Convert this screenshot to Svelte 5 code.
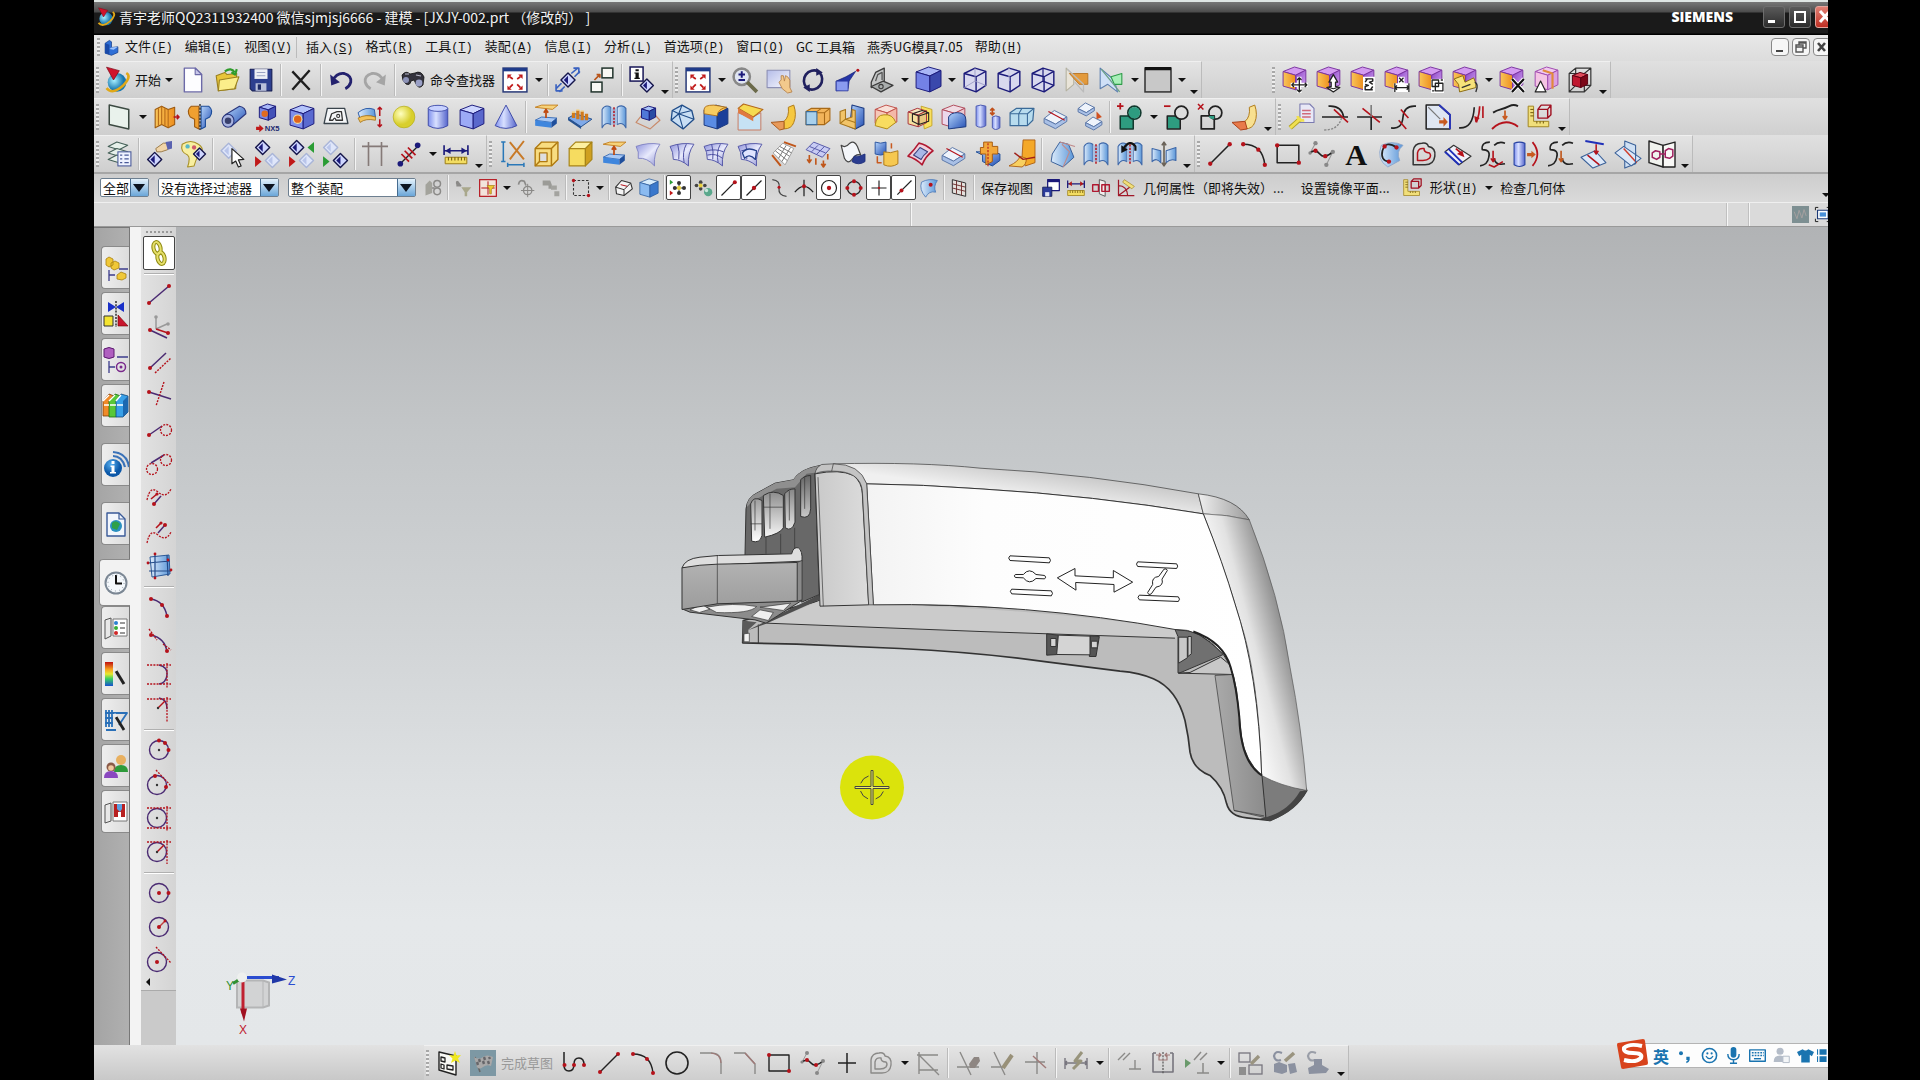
<!-- App.svelte (Svelte 5 Runes): NX modeling window -->
<script lang="ts">
  type Menu = { label: string; key?: string; split?: boolean };

  const RED = "#b5121b";
  const NAVY = "#1b1a7a";
  const GRAY = "#8b8a88";

  // --- svg helpers, all on a 24x24 grid ---
  const p = (d: string, stroke = "#222", w = 1.4, fill = "none", extra = "") =>
    `<path d="${d}" stroke="${stroke}" stroke-width="${w}" fill="${fill}" stroke-linejoin="round" ${extra}/>`;
  const f = (d: string, fill: string, stroke = "none", w = 1) => p(d, stroke, w, fill);
  const dot = (x: number, y: number, r = 2, fill = RED) => `<circle cx="${x}" cy="${y}" r="${r}" fill="${fill}"/>`;
  const ring = (x: number, y: number, r: number, stroke = "#222", w = 1.4, extra = "") =>
    `<circle cx="${x}" cy="${y}" r="${r}" fill="none" stroke="${stroke}" stroke-width="${w}" ${extra}/>`;
  const dash = 'stroke-dasharray="2 1.2"';

  function cube(x: number, y: number, s: number, top: string, left: string, right: string, line = NAVY) {
    const q = (a: number, b: number) => `${(x + a * s).toFixed(1)} ${(y + b * s).toFixed(1)}`;
    return (
      f(`M${q(0, 0.2)}L${q(0.5, 0)}L${q(1, 0.14)}L${q(0.55, 0.36)}Z`, top, line, 0.9) +
      f(`M${q(0, 0.2)}L${q(0.55, 0.36)}L${q(0.55, 1)}L${q(0, 0.84)}Z`, left, line, 0.9) +
      f(`M${q(0.55, 0.36)}L${q(1, 0.14)}L${q(1, 0.78)}L${q(0.55, 1)}Z`, right, line, 0.9)
    );
  }

  const dia = (x: number, y: number, r: number, on = true) =>
    f(`M${x} ${y - r}L${x + r} ${y}L${x} ${y + r}L${x - r} ${y}Z`, on ? "#cfd6ff" : "#dfe6fa", on ? "#15154a" : "#a9b5d8", 1.3) +
    f(`M${x} ${y - r * 0.6}V${y + r * 0.6}L${x - r * 0.6} ${y}Z`, on ? "#1b1a7a" : "#b9c5ea");

  const gold = (extra: string) => cube(1, 0, 21, "#d49cf0", "url(#gGold)", "url(#gPurple)", "#7a34a0") + extra;
  const sheetBlock = (x: number, y: number, s: number) =>
    f(`M${x} ${y + s * 0.35}L${x + s * 0.45} ${y}L${x + s} ${y + s * 0.28}L${x + s * 0.5} ${y + s * 0.6}Z`, "#eef3fb", "#5b77a8", 0.9) +
    f(`M${x} ${y + s * 0.35}V${y + s * 0.55}L${x + s * 0.5} ${y + s * 0.8}L${x + s} ${y + s * 0.48}V${y + s * 0.28}L${x + s * 0.5} ${y + s * 0.6}Z`, "#a9c0e6", "#5b77a8", 0.9);
  const ribs =
    f("M1 5Q4 0 9 3V19Q4 16 1 22Z", "url(#gSky)", "#3d67a8", 1) +
    f("M15 3Q20 0 23 4V22Q20 16 15 19Z", "url(#gSky)", "#3d67a8", 1) +
    f("M9 4H15V19H9Z", "#a7bfe0") + p("M12 3V21", RED, 1.4, "none", dash);
  const emboss =
    f("M2 15L8 12L22 13L17 17Z", "#a8c8f5", "#2c62b0", 0.8) + f("M2 15L17 17V22L2 20Z", "#3f86dd") + f("M17 17L22 13V18L17 22Z", "#1f4f9c") +
    f("M2 3L8 1H23L18 5Z", "#f6d27a", "#c07a18", 0.8) + p("M12 13V6M10 8L12 5L14 8", "#c04a10", 1.6);
  const surf = (lines: string) => f("M1 5Q12 1 23 3Q17 11 18 23Q11 17 4 17Q4 10 1 5Z", "url(#gLav)", "#5558a8", 0.9) + p(lines, "#4a4da0", 0.9);
  const ruler = f("M2 15H22V21H2Z", "#f3dd62", "#9a7b10", 0.9) + p("M5 15V18M8 15V18M11 15V18M14 15V18M17 15V18M20 15V18", "#6a5208", 0.9);
  const caliper = f("M2 2H7V16H21V21H2Z", "#f1df7a", "#a08420", 0.9) + p("M4 5H7M4 8H7M4 11H7M10 18V16M13 18V16M16 18V16", "#6a5208", 0.9);
  const wire = (hidden: string) =>
    f("M2 6L12 1L22 4V17L13 23L2 19Z", "#d8d8ee", NAVY, 1.3) + p("M2 6L13 9L22 4M13 9V23", NAVY, 1.3) + hidden;
  const curveArrow = (a: string, b: string) => p(a, "#222", 1.5) + p(b, RED, 1.5);
  const bigCircle = (x: number, y: number, extra: string) => ring(x, y, 9.5, "#4a2a72", 1.4) + extra;
  const shapeOffset = (c: string, d: string) =>
    p("M2 22V9Q3 2 10 2Q15 1 16 5Q23 6 22 14Q21 22 13 22Z", c, 1.4) + p("M6 18V11Q7 6 12 7Q12 11 17 11Q19 13 17 16Q15 18 11 18Z", d, 1.4);

  const icons: Record<string, string> = {
    logo: dot(12, 14, 8, "url(#gGlobe)") + p("M3 19Q8 25 17 17Q25 9 20 6", "#e0a818", 2.2) + f("M3 1L14 4L9 12Z", "#d0142c", "#7c0818", 0.6),
    part: f("M3 6L9 2L12 4V12L21 11V19L12 23L3 20Z", "#2f6fd6", "#123a86", 1) + f("M3 6L9 8V22L3 20Z", "#1a4aa8") + f("M12 12L21 11L15 15L9 14Z", "#9cc4ff"),
    new: f("M4 1H14L20 7V23H4Z", "#fdfdff", "#6c6aa8", 1.3) + f("M14 1V7H20Z", "#c9c8ea", "#6c6aa8", 1),
    open: f("M2 8L10 5L12 7L21 6L20 20L4 22Z", "#e8c53a", "#9a8020", 1) + f("M5 12L23 9L19 20L4 22Z", "#fbee8a", "#9a8020", 1) + p("M10 4Q16 0 19 5M16 5L19.500 7L21 2", "#2f9c2c", 2),
    save: f("M2 2H22V22H4L2 20Z", "#2d3f8f", "#141d55", 1) + f("M6 2H18V11H6Z", "#eef0f6") + p("M8 5H16M8 8H16", "#9ba3c4", 1) + f("M7 15H17V22H7Z", "#b9c0da") + f("M9 16H12V21H9Z", "#1d2a66"),
    del: p("M4 4L20 21M20 3L4 21", "#1f1f1f", 2.2),
    undo: p("M4 13Q8 5 15 6Q22 8 21 14Q20 18 16 20", "#23216e", 2.6) + f("M2 7L3 17L11 14Z", "#23216e"),
    redo: p("M20 13Q16 5 9 6Q2 8 3 14Q4 18 8 20", "#a5a5a5", 2.6) + f("M22 7L21 17L13 14Z", "#a5a5a5"),
    find: f("M1 7Q5 2 9 6L14 5Q20 2 23 9L22 17Q18 22 15 16L13 12L10 13Q9 18 5 16Q1 13 1 7Z", "#33323c", "#111", 0.8) + dot(5, 12, 3, "#8d93b8") + dot(18, 15, 3.4, "#9aa0c6") + p("M4 6H8M15 7L20 8", "#b9b9c9", 1.2),
    fit: `<rect x="1" y="1" width="22" height="22" fill="#fff" stroke="#2a3b78" stroke-width="1.4"/>` + f("M1 1H23V4H1Z", "#1e3b8a") + p("M7 9L10 11M17 9L14 11M7 19L10 16M17 19L14 16", "#c01818", 1.6) + f("M5 7H9L5 11ZM19 7H15L19 11ZM5 21H9L5 17ZM19 21H15L19 17Z", "#c01818"),
    orient: dia(12, 12, 6.5) + p("M15 6L21 1M18 9L23 4M1 20L6 15M4 23L9 18", "#3a62c0", 1.5) + p("M17 1H22V6M1 16V22H7", "#3a62c0", 1.5),
    boxes: `<rect x="12" y="1" width="10" height="9" fill="#f8f8f4" stroke="#23352e" stroke-width="1.4"/><rect x="2" y="14" width="10" height="9" fill="#f8f8f4" stroke="#23352e" stroke-width="1.4"/>` + p("M5 12L10 7M7 7H10V10", "#b8541a", 1.6),
    info: `<rect x="1" y="0" width="12" height="13" fill="#fff" stroke="#1b1a5a" stroke-width="1.4"/>` + f("M6 2H9V4H6ZM5 5H9V10H10V11H5V10H6V6H5Z", "#111") + dia(16.5, 17, 6),
    zoom: ring(9, 9, 7.5, "#888", 2.4) + dot(9, 9, 6.3, "#dfe5f2") + p("M14 14L23 23", "#6b6a4a", 3.4) + p("M9 4V10M6 7H12M6 12H12", NAVY, 1.8),
    pan: f("M1 3H22V19H1Z", "url(#gPanel)", "#8d90b5", 1) + f("M12 14L14 12V8L16 8L17 13L18 8L20 9L22 12V19L24 23L20 24L15 20Z", "#f2c98c", "#b5814a", 0.8),
    rotate: p("M6 19A9.500 9.500 0 0 1 17 4M18 5A9.500 9.500 0 0 1 7 20", "#20205e", 2.4) + f("M15 1L21 5L15 8ZM9 23L3 19L9 16Z", "#20205e"),
    persp: f("M2 13L11 9L20 4L14 13L13 20L2 22Z", "#2536a8", "#131c6c", 0.6) + f("M2 13H13V22H2Z", "#8a9bf0", "#2b38a0", 0.8) + dot(22, 3, 1.4),
    section: f("M3 14L7 5L15 1V15L3 19Z", "#c4c6c6", "#3c3c3c", 1.2) + f("M3 18L14 13L23 17L12 23Z", "#a9adad", "#3c3c3c", 1.2) + p("M7 13L9 7L13 5V12", "#555", 1.2) + ring(12, 18, 2, "#3c3c3c", 1),
    shaded: cube(1, 0, 23, "#a9b6f6", "#7482e6", "#3a48ac"),
    wireA: wire(p("M12 1V13L2 19M12 13L22 17", "#9a9ac4", 0.8)),
    wireB: wire(p("M12 1V13", "#c5c5dc", 0.8)),
    wireC: wire(p("M12 1V13L2 19M12 13L22 17", NAVY, 1.1)),
    clipA: f("M2 1L9 8V16L2 22Z", "#e9e4d8", "#b5b2a0", 1) + f("M5 6H22V16H14Z", "#e39a3c", "#b57020", 0.8) + p("M3 2L18 16V23L10 14", "#bbb", 1.2),
    clipB: f("M2 1L15 12L18 23L9 16L2 20Z", "#cfe0f8", "#5d7fb0", 1) + f("M12 9L22 6V16H15Z", "#a8efb8", "#2d9c48", 1) + p("M3 2L20 23", "#6aa088", 1.2),
    bg: `<rect x="0" y="1" width="24" height="22" fill="#c8c8c8" stroke="#333" stroke-width="1.4"/>` + f("M0 0H24V3H0Z", "#111"),
    moveFace: gold(p("M16 9V24M8 16.500H24", "#fff", 4) + p("M16 10V23M9 16.500H23M14 12L16 10L18 12M14 21L16 23L18 21M11 14.500L9 16.500L11 18.500M21 14.500L23 16.500L21 18.500", "#222", 1.2)),
    pullFace: gold(f("M16 7L20 14H18V18L22 19L16 23L10 19L14 18V14H12Z", "#fff", "#222", 1.2) + p("M12 19L16 20L20 19", "#222", 1)),
    replaceFace: gold(f("M12 9H23V23H12Z", "#fff") + p("M14 11H21V13L18 14L21 16M21 21H14V18L17 17L14 16M16 11L14 14M19 21L21 18", "#222", 1.3)),
    dimFace: gold(f("M9 15H24V23H9ZM13 9H19V15H13Z", "#fff") + p("M10 15V23M23 15V23M10 19H23M12 17L10 19L12 21M21 17L23 19L21 21M14 10L18 14M18 10L14 14", "#222", 1.2)),
    groupFace: gold(f("M12 11H24V24H12Z", "#fff") + p("M13 12H19V18H13ZM16 15H23V22H16ZM13 22H15M21 12H23", "#222", 1.2)),
    labelFace: gold(f("M2 11L10 8L12 14L20 10L22 15L22 19L7 23L6 16Z", "#f7e27a", "#8a6a10", 0.9) + p("M9 19L17 16M21 14Q25 16 22 23", "#333", 1.3)),
    deleteFace: gold(p("M12 11L23 23M23 11L12 23", "#fff", 3.8) + p("M12 11L23 23M23 11L12 23", "#111", 2)),
    mirrorFace: cube(2, 0, 21, "#efc8f0", "#f4c4e4", "#dca0e0", "#a04ab0") + p("M9 3L18 6V20", "#e08a3a", 2) + f("M7 13L12 23H2Z", "#fff", "#222", 1.1),
    redCube: p("M2 6L8 1H22V17L16 23H2ZM2 6H16V23M16 6L22 1M8 1V17L2 23M8 17H22", "#333", 1.1) + cube(5, 5, 14, "#e04a5a", "#c01830", "#7c0818", "#5c0010"),

    sheet: f("M3 1L21 5V23L3 19Z", "#e9f2ec", "#3c4a42", 1.4),
    extrude: f("M2 5L8 2L14 5L20 3V19L14 22L8 19L2 22Z", "url(#gGold)", "#9c5a10", 1) + p("M8 2V19M14 5V22M5 4V20M11 4V20", "#b56a18", 1) + p("M19 12H24M22 10L24 12L22 14", RED, 1.5),
    revolve: f("M11 2L4 2Q-1 6 3 12L7 14V21L11 23Z", "#f0a030", "#9c5a10", 1) + f("M13 2L20 2Q25 6 21 12L17 14V21L13 23Z", "url(#gBlue)", "#1c4c98", 1) + p("M12 0V24", "#222", 1.2, "none", dash),
    tube: f("M4 10L17 2Q23 3 23 9L9 21Z", "url(#gBlue)", "#2a367c", 1) + `<ellipse cx="6.500" cy="15.500" rx="5.500" ry="6" fill="#a9b4e0" stroke="#2a367c"/>` + dot(6.5, 15.5, 3, "#39406c"),
    nx5: cube(4, 0, 15, "#a8b8f8", "#7a88e4", "#4452b8") + dot(9, 9, 3, "#e06a20") + `<text x="9" y="25" font-family="Liberation Sans, sans-serif" font-size="7" font-weight="700" fill="#222a70">NX5</text>` + f("M1 21H4V19L8 22.500L4 26V24H1Z", "#c01818"),
    hole: cube(1, 1, 22, "#b4c4fb", "#7f90ec", "#5a6ad0") + dot(8, 14, 4.4, "#f4e0a0") + dot(8, 14, 3.4, "#e0641c"),
    plan: f("M4 4H20L23 18H1Z", "#f4f6f8", "#3a444c", 1.2) + p("M6 15L8 9L13 7H17L18 15H12Q11 11 9 15Z", "#333", 1.2) + ring(14, 11, 1.4, "#333", 1),
    offsetFace: f("M1 8Q8 2 16 5L17 12Q8 9 3 14Z", "url(#gSky)", "#2d5ca8", 0.9) + f("M1 13Q8 9 17 12V15Q8 13 3 17Z", "#f3c35a", "#a8761c", 0.8) + p("M21 3V11M21 14V21M19 5L21 3L23 5M19 19L21 21L23 19", RED, 1.4),
    sphere: dot(12, 12, 10, "url(#gYel)") + ring(12, 12, 10, "#b8b020", 0.7),
    cyl: f("M3 4Q12 -1 21 4V20Q12 25 3 20Z", "url(#gBlueH)", "#3e4aa8", 0.9) + `<ellipse cx="12" cy="4" rx="9" ry="2.800" fill="#c8d2ff" stroke="#3e4aa8" stroke-width=".8"/>`,
    block: cube(1, 1, 22, "#cdd6ff", "#9caaf6", "#5a68cc"),
    cone: f("M12 1L22 20Q12 25 2 20Z", "url(#gBlueH)", "#3e4aa8", 0.9),
    emboss,
    pads: f("M1 13L8 9L23 14L13 21Z", "#7fa9e8", "#24508f", 0.9) + f("M1 13L13 21V23L1 15Z", "#24508f") + p("M6 13V8M10 14V6M14 15V7M18 15V9", "#d07a1c", 3) + p("M6 8V7M10 6V5M14 7V6", "#f8cf70", 3),
    ribs,
    patternFace: p("M12 3L23 15L14 23L1 17Z", "#c88a6a", 1.1) + cube(6, 2, 13, "#a8c4f8", "#5078d8", "#2a4ca4"),
    poly: f("M12 1L21 6L23 14L13 23L2 15L3 6Z", "#c8def4", "#1f4c88", 1.2) + p("M12 1L9 9L3 6M9 9L13 23M9 9L21 6M9 9L2 15M9 9L23 14", "#1f4c88", 1),
    blend: cube(1, 1, 22, "#f6bd50", "#5a8ce4", "#1a3f9a", "#1c3a80") + f("M1 5Q1 1 10 1L22 3Q14 4 13 11L1 9Z", "#f7cc60", "#a86a18", 0.8),
    chamfer: f("M1 8L13 13L22 8V24H1Z", "#c6e2f4", "#c87a60", 0.9) + f("M1 4L6 0L24 5L15 12Z", "#f6da50", "#b5681a", 1) + f("M1 4L15 12V16L1 8Z", "#e07a40"),
    sweep: f("M12 16Q17 12 16 3L21 1Q24 10 21 17Q19 23 12 23Z", "#f6c840", "#b07a18", 0.9) + f("M0 17L12 16L12 23L8 24Z", "#e89a5a", "#a85a20", 0.9),
    thicken: f("M1 7L6 4H23L23 15L18 19H1Z", "#f2b45a", "#a86a18", 1) + f("M1 7H11V19H1Z", "#a8d0ec", "#3a6a98", 1) + p("M11 7L15 4M18 8V19M11 8H18L23 4", "#a86a18", 1),
    shell: f("M12 1L23 4V19L15 23L10 21Z", "url(#gBlue)", "#1c3a80", 1) + f("M1 7L6 5V14L12 12V5L15 6V23L1 18Z", "#f2c468", "#a8761c", 1) + p("M1 18L6 14L15 17", "#a8761c", 1),
    domeRed: cube(2, 1, 20, "#f8e0d8", "#f6c8b8", "#f4b8a8", "#c0504a") + f("M2 20Q3 10 10 10Q18 9 21 17L13 23Z", "#f8dc60", "#b08a18", 0.9),
    domeGrid: f("M13 2L23 5V20L16 23Z", "#f8e060", "#c0a020", 0.8) + cube(1, 4, 17, "#f8e8c0", "#f4e0a0", "#e8c880", "#a8303a") + p("M5 9L14 6L20 8V16L11 19L5 16ZM5 9L11 11L20 8M11 11V19", "#222", 1),
    domeBlue: cube(1, 1, 21, "#f0dce4", "#ecd8ec", "#ecc8d0", "#b04a5a") + f("M7 23V12Q9 8 15 8Q23 8 23 15V21Z", "url(#gBlue)", "#1c3a80", 0.9),
    cylPair: f("M1 2Q5 0 10 2V20Q5 23 1 20Z", "url(#gBlueH)", "#4c5ab0", 0.9) + f("M16 12Q19 10 23 12V22Q19 25 16 22Z", "url(#gBlueH)", "#4c5ab0", 0.9) + p("M16 4V10M14 6L16 4L18 6M14 8L16 10L18 8", "#c0501a", 1.5),
    boxSplit: f("M1 8L7 4H23L22 15L17 20H1Z", "#b8dcee", "#3a6a98", 1.1) + p("M1 9H17L23 4M17 9V20M12 4L9 9V20", "#3a6a98", 1),
    trimSheet: sheetBlock(1, 6, 21) + p("M5 7L20 15", RED, 1.1),
    sheets: sheetBlock(1, -1, 15) + sheetBlock(8, 12, 15) + f("M18 7L23 12L18 14Z", "#d05020"),
    unite: f("M3 11H15V23H3Z", "#2e9c80", "#12392e", 1.4) + ring(16, 8, 6, "#12392e", 1.6) + dot(16, 8, 5.3, "#2e9c80") + p("M3 -1V5M0 2H6", RED, 1.6),
    subtract: f("M3 11H15V23H3Z", "#2e9c80", "#222", 1.4) + dot(16, 8, 6, "#dedede") + ring(16, 8, 6, "#222", 1.6) + p("M0 2H6", RED, 1.6),
    intersect: p("M3 11H15V23H3Z", "#222", 1.6) + ring(16, 8, 6, "#222", 1.6) + f("M10 11H15V14Q11 14 10 11Z", "#2e9c80") + p("M0 0L5 5M5 0L0 5", RED, 1.4),
    sweepRed: f("M12 16Q17 12 16 3L21 1Q24 10 21 17Q19 23 12 23Z", "#f8e090", "#b07a18", 0.9) + f("M0 17L12 16L14 23L8 24Z", "#e87a4a", "#a8401a", 0.9),
    editFeature: f("M11 0H20L24 4V17H11Z", "#e8e8f6", "#7a7ab0", 1) + p("M13 6H21M13 9H21M13 12H21", "#d06a7a", 1.2) + p("M2 22L11 14", "#b0a020", 4.4) + p("M2 22L12 13M9 11Q9 16 15 15", "#f0e050", 2.6),
    curveEdit: curveArrow("M0 12H24M6 2Q18 1 20 12", "M11 5L24 17") + p("M2 24Q15 24 18 13", "#888", 1.3, "none", dash),
    cross: curveArrow("M1 12H24M14 12V24", "M6 4L22 17") + p("M14 1V12", "#777", 1.4),
    sCurve: curveArrow("M1 22Q11 24 12 12Q13 1 24 2", "M8 15L15 23M10 5L17 13"),
    planeBox: f("M2 1H14L24 10V23H2Z", "#dfe6f2", "#222", 1.4) + p("M14 1L24 10V23", "#2a36b8", 1.8) + p("M4 3L15 14", "#777", 1) + f("M14 15H18V12L22 16.500L18 21V18H14Z", "#c85a20"),
    curveOffset: curveArrow("M1 22Q14 23 15 3", "M17 17Q20 9 20 2M23 13V2") + f("M15 11L20 13L16 17Z", RED),
    wave: p("M1 8Q4 6 8 5T16 2T24 2", "#222", 1.8) + p("M0 23Q12 12 24 21", RED, 1.8) + p("M12 6V13M10 11L12 14L14 11", "#c85a20", 1.6),
    caliperBox: caliper + p("M11 5L14 1H23V10L20 13H11ZM11 5H20V13M20 5L23 1", "#a01020", 1.3),

    list: f("M2 5L10 1L20 4L12 8Z", "#e6f0ea", "#446058", 1) + f("M2 11L10 7L20 10L12 14Z", "#e6f0ea", "#446058", 1) + f("M2 17L10 13L16 15L12 20Z", "#e6f0ea", "#446058", 1) + `<rect x="11" y="10" width="12" height="13" fill="#eef2ff" stroke="#4a5a98"/>` + p("M13 13H15M17 13H21M13 16.500H15M17 16.500H21M13 20H15M17 20H21", "#4a5a98", 1.3),
    hand: dia(8, 17, 6.5) + f("M9 7L16 2L22 2L20 8L14 10L10 10Z", "#f0d4a8", "#9a7a48", 0.9) + f("M18 1L24 0V7L20 8Z", "#5a62b0"),
    palette: f("M2 3Q10 -2 17 3Q22 6 20 11Q16 12 13 23L7 24Q10 15 7 13Q0 10 2 3Z", "#f8efa0", "#a89028", 1) + dot(7, 5, 2, "#58b8c8") + dot(13, 6, 2, "#d05a6a") + dia(18, 12, 5.5),
    select: dia(8, 9, 7, false) + f("M11 7L22 17L17 17.500L19.500 23L17 24L14.500 18.500L11 21Z", "#fff", "#222", 1.1),
    diaA: dia(8, 6, 6.5) + dia(17, 18, 6.5, false) + f("M1 14L7 19L1 24Z", "#c01818"),
    diaB: dia(8, 6, 6.5) + dia(17, 18, 6.5, false) + f("M24 1L18 6L24 11Z", "#2a9c34") + f("M1 14L7 19L1 24Z", "#c01818"),
    diaC: dia(8, 6, 6.5, false) + dia(17, 18, 6.5) + f("M1 14L7 19L1 24Z", "#2a9c34"),
    hash: p("M6 1V23M18 1V23M0 5H24", "#857a78", 1.5),
    dims: p("M3 22L22 3", "#222", 1.2) + p("M5 12L12 19M8 9L15 16M11 6L18 13", RED, 1.6) + dot(4, 21, 2.6, NAVY) + dot(20, 4, 2.6, NAVY),
    rulerDim: ruler + p("M1 4V13M23 4V13M1 9H23", NAVY, 1.5) + f("M2 9L7 6V12ZM22 9L17 6V12Z", NAVY),

    sketchX: p("M4 1V19M2 1H6M2 19H6M8 22H23M8 20V24M23 20V24", "#2a78b8", 1.4) + p("M10 17L23 0M10 1L23 17", "#c87a28", 1.8),
    wireBox: f("M2 7L8 1H23V17L17 23H2Z", "#f8dc80", "#b07a10", 1.3) + f("M6 11H13V19H6Z", "#dedede", "#b07a10", 1.2) + p("M2 7H17V23M17 7L23 1M6 19L2 23", "#b07a10", 1.4),
    yBox: f("M2 7L8 1H23L17 7Z", "#fdf0a0", "#a88418", 1.1) + f("M2 7H17V23H2Z", "#f6dc60", "#a88418", 1.1) + f("M17 7L23 1V17L17 23Z", "#cfa020", "#a88418", 1.1),
    surfA: f("M1 5Q12 1 23 3Q17 11 18 23Q11 15 3 16Q4 10 1 5Z", "url(#gLav)", "#7a7cc0", 0.8),
    surfB: surf("M8 3Q10 10 9 17M16 3Q12 10 14 20"),
    surfC: surf("M8 3Q10 10 9 17M16 3Q12 10 14 20M3 9Q12 7 19 10M4 13Q12 11 18 16"),
    surfD: surf("M8 3Q10 10 9 17M4 9Q12 7 18 9") + f("M5 11Q9 5 18 9L17 17Q11 11 7 16Z", "#dfe4ff", "#25408c", 1.2),
    meshA: f("M2 11L11 2L21 7L13 22Z", "#fff", "#999", 0.8) + p("M6 7L17 14M8 5L19 11M4 9L15 18M14 4L7 16M18 6L10 19", "#777", 0.9) + p("M1 13L9 23M12 1L23 5", "#c0561a", 1.8),
    meshB: f("M1 8L8 1L23 7L16 15Z", "#c8ccf4", "#5558a8", 0.9) + p("M4 5L19 11M6 10L12 4M11 12L18 5", "#5558a8", 0.9) + p("M4 13V19M10 16V22M17 18V23M21 12V17M2 17L4 20L6 17M15 21L17 24L19 21", "#c0561a", 1.5),
    flagSurf: f("M2 4Q6 7 10 2Q14 -1 17 5L20 13Q16 11 12 17Q8 22 5 16Z", "#f4f6fa", "#444", 1.1) + f("M14 14Q19 15 24 12V19Q18 23 12 19Z", "#2a3c90", "#1c2c78", 0.8),
    twoShapes: f("M2 1Q7 3 12 1V12Q7 14 2 12Z", "url(#gBlue)", "#2b55a0", 0.9) + f("M10 10Q16 12 23 9V21Q17 25 10 22Z", "#f6c850", "#b07a18", 0.9) + p("M4 14V20H8M17 2V7", "#c85a20", 1.4),
    redSurf: f("M1 14Q7 8 11 2Q17 3 24 9Q17 14 14 22Q8 16 1 14Z", "#f0d0dc", "#b01830", 1.5) + f("M6 13Q9 10 12 6L19 10Q15 13 13 17Z", "#a8b8e8", "#39407c", 1),
    crossGold: f("M1 10L7 13V19L16 23L23 18V12L17 10Z", "url(#gBlue)", "#1c4c98", 0.9) + f("M8 1H16V5H21V12H16V19L10 22V12H5V6H8Z", "#f2a83a", "#a85a10", 0.9) + p("M12 2V24", RED, 1, "none", dash),
    bone: f("M13 -1H24V20L15 23L12 15Z", "#f4a828", "#a85a10", 0.8) + f("M0 23Q9 19 10 14L16 16Q16 22 12 24Z", "#f8d060", "#a85a10", 0.8) + p("M5 11L13 17L24 15", "#a02018", 1.3),
    fold: f("M3 12L10 1L18 3L23 15L13 24L2 19Z", "url(#gSky)", "#3a6098", 0.9) + p("M10 1L24 5M12 3L19 10L13 24", "#c08a8a", 1),
    ribsArrow: ribs + p("M6 7Q12 -2 17 5V9", "#111", 2) + f("M4 4V11L10 8Z", "#111"),
    ribsSplit: f("M1 7L9 9V20Q5 15 1 19Z", "url(#gSky)", "#3d67a8", 1) + f("M14 9L23 6V18Q18 16 14 20Z", "url(#gSky)", "#3d67a8", 1) + p("M12 1V23M10 4L12 1L14 4M10 20L12 23L14 20", "#6a6258", 1.5),
    line: p("M3 21L21 3", "#222", 1.4) + dot(3, 21) + dot(21, 3),
    arc: p("M2 3Q20 3 22 22", "#222", 1.4) + dot(2, 3) + dot(16, 8) + dot(22, 22),
    rect: p("M2 4H22V20H2Z", "#222", 1.4) + dot(2, 4) + dot(22, 20),
    spline: p("M1 11L6 2M16 22L22 10", "#999", 1) + p("M1 11Q6 7 10 12T22 10", "#222", 1.6) + dot(6, 2, 2, "#888") + dot(1, 11, 1.6, "#888") + dot(16, 22, 2, "#888") + dot(22, 10, 2, "#888") + dot(6, 9) + dot(15, 14),
    text: `<text x="2" y="22" font-family="Liberation Serif, serif" font-size="28" font-weight="700" fill="#111">A</text>`,
    surfCurve: f("M4 4Q14 -1 24 4Q17 10 21 18L10 24Q-1 17 4 4Z", "url(#gSky)", "#8aa4c8", 0.8) + p("M18 6Q8 -1 5 9Q3 18 11 19", "#222", 1.6) + dot(18, 6) + dot(7, 5) + dot(11, 19),
    offsetCurve: shapeOffset("#333", RED),
    surfLine: f("M0 10L8 4L24 14L13 22Z", "#f0f2fa", "#333", 1.1) + p("M0 10L13 22M3 7L16 20", "#2030b8", 1.8) + p("M10 7L16 12", RED, 1.6) + f("M11 12L18 15L16 9Z", RED),
    bridge: p("M10 1Q2 1 3 8Q11 8 9 15Q8 22 1 23M14 4Q18 0 24 2M24 21Q15 23 14 16", "#222", 1.5) + p("M13 9V18M11 16L13 19L15 16M9 22L14 24L22 19", RED, 1.5),
    cylCurve: f("M1 2Q6 0 11 2V22Q6 25 1 22Z", "url(#gBlueH)", "#2440a0", 1) + p("M18 1Q27 12 18 23", RED, 1.6) + f("M13 11H17V9L21 12.500L17 16V14H13Z", "#c85a20"),
    bridgeB: p("M10 1Q2 1 3 8Q11 8 9 15Q8 22 1 23M14 4Q18 0 24 2M24 21Q15 23 14 16", "#222", 1.5) + p("M13 9V18M11 16L13 19L15 16", "#c0561a", 1.5),
    project: f("M0 15L13 9L23 20L11 25Z", "#dce8f8", "#3a6098", 1) + p("M4 0L21 3", "#2030b8", 1.8) + p("M14 3V11M12 9L14 12L16 9M6 13L17 22", RED, 1.4),
    section2: f("M9 0L19 4V21L9 25Z", "#cfe0f4", "#3a6098", 1) + f("M0 11L8 5L24 16L15 23Z", "#dce8f8", "#3a6098", 1) + p("M8 7L20 20", "#d04030", 1.4) + p("M19 10V21", "#3a6098", 1),
    mirrorBox: f("M0 0L13 4V24L0 20Z", "#f0f2ee", "#222", 1.3) + f("M13 4L24 1V24H13Z", "#f8f8f6", "#222", 1.3) + p("M3 11L6 9L10 10V15L7 17L3 15ZM15 9L18 7L22 8V14L19 16L15 15ZM10 12H15", "#a02060", 1.4),

    asm: f("M3 8L8 3L11 6V18L3 21Z", "#a3a39c") + ring(17, 7, 4, GRAY, 1.8) + ring(17, 16, 4, GRAY, 1.8) + p("M11 12H14", GRAY, 2),
    filterGray: p("M5 4L9 9H4M5 4Q3 9 9 9", GRAY, 2.4) + f("M10 11H22L17 17V22H14V17Z", "#a9a88c"),
    target: `<rect x="2" y="2" width="20" height="20" fill="#f3e4dc" stroke="${RED}" stroke-width="1.400"/>` + p("M12 4V20M4 12H20", RED, 1.2) + f("M11 9H20L16 14V19H14V14Z", "#f0c830", "#a07a10", 0.8),
    targetGray: p("M3 8Q4 1 10 4L12 9", GRAY, 2) + ring(14, 15, 5, GRAY, 1.6) + p("M14 7V23M6 15H22", GRAY, 1.2),
    stepsGray: f("M2 3H11L13 8V13H9V9H2Z", "#9b9b97") + f("M12 9H19V14H12ZM16 16H22V22H16Z", "#a3a39f"),
    marquee: `<rect x="3" y="3" width="18" height="18" fill="none" stroke="#333" stroke-width="1.300" stroke-dasharray="3 2"/>` + dot(3, 3) + dot(21, 21),
    boxPlain: f("M2 11L9 3L20 6L22 13L12 21L3 19Z", "#f4f4f4", "#333", 1.3) + p("M2 11L12 14L20 6M12 14V21", "#333", 1.2) + p("M8 8L16 10", RED, 1.2),
    boxBlue: cube(1, 1, 22, "#d8ecfc", "#8abaf0", "#3a78cc", "#2a5a9c"),
    snapAll: p("M12 5V19M5 12H19", "#333", 1.2) + dot(12, 6, 2.4, "#333") + dot(12, 18, 2.4, "#333") + dot(7, 12, 2.4, "#333") + dot(18, 12, 2.4, "#333") + dot(12, 12, 2.6, "#e8d040") + f("M1 2L5 5L1 8Z", "#2a9c34") + f("M1 15L5 18L1 21Z", "#c01818"),
    snapSet: dot(8, 5, 2.2, "#444") + dot(3, 9, 2.2, "#444") + dot(13, 9, 2.2, "#444") + dot(8, 13, 2.2, "#444") + dot(8, 9, 2.4, "#e8d040") + dot(17, 17, 5, "#5aa88c") + dot(15, 15, 2, "#c8e8dc"),
    endPoint: p("M3 21L19 5", "#222", 1.4) + dot(19, 5, 2.4),
    midPoint: p("M3 21L21 3", "#222", 1.4) + dot(12, 12, 2.6),
    pole: p("M4 2Q14 3 12 12Q11 21 21 22", "#444", 1.5) + dot(12, 11, 1.8),
    intersectPt: p("M1 17Q12 3 23 17M12 2V22", "#222", 1.5) + dot(12, 10, 2.4),
    centerPt: ring(12, 12, 9) + dot(12, 12, 2.6),
    quadPt: ring(12, 12, 8) + dot(12, 4, 2.4) + dot(12, 20, 2.4) + dot(4, 12, 2.4) + dot(20, 12, 2.4),
    plusPt: p("M12 3V21M3 12H21", "#222", 1.4) + dot(12, 12, 1.4),
    onCurve: p("M4 20L21 3", "#222", 1.4) + dot(9, 15, 2.4),
    onFace: f("M3 5Q12 0 22 3Q17 10 20 17Q12 15 8 23Q0 14 3 5Z", "url(#gSky)", "#4a78b8", 1) + dot(14, 8, 2.4),
    grid: f("M4 2L20 6V22L4 18Z", "#e4e0dc", "#333", 1.2) + p("M9 3V19M15 5V21M4 7L20 11M4 12L20 16", "#6a2a2a", 1.1),
    saveView: f("M8 2H22V15H8Z", "#fff", NAVY, 1.5) + f("M8 2H22V5H8Z", NAVY) + f("M2 11H13V22H2Z", "#2c3c9c", "#141d55", 1) + f("M5 17H10V22H5Z", "#dfe3f4"),
    rulerS: ruler + p("M2 3V12M22 3V12M2 7H22", NAVY, 1.5) + f("M3 7L7 4V10ZM21 7L17 4V10Z", "#b01818"),
    mirrorS: f("M10 2L17 4V22L10 19Z", "#f2eeee", "#444", 1) + p("M2 8H9V16H2ZM13 8H22V16H13ZM17 8V16", "#b01830", 1.7),
    angle: p("M3 2V21H22M3 21L18 10M3 9Q13 9 14 21", "#a01828", 1.5) + f("M10 2L22 10L19 13L8 5Z", "#f1df7a", "#a08420", 0.8),
    caliperS: caliper + p("M11 4L14 1H23V9L20 12H11ZM11 4H20V12", "#a01020", 1.5),
    gridOff: f("M0 0H24V24H0Z", "#7d8f92") + p("M3 8L7 18L10 6L14 17L17 5L20 14", "#a5a0a0", 1.4),
    fullView: p("M2 6V2H6M18 2H22V6M2 18V22H6M18 22H22V18", "#222", 1.4) + f("M5 6H20V18H5Z", "#fff", "#1d3a78", 1.6) + f("M8 9H17V15H8Z", "#4a90d8"),

    sketch: f("M2 1L19 5V24L2 19Z", "#f8f8f4", "#222", 1.4) + p("M4 6L8 7V11L4 10ZM4 13L7 14V18L4 17ZM10 14L16 15V19L10 18Z", "#222", 1.3) + f("M18 0L19.500 4.500L24 4L21 7.500L23 12L18.500 9.500L14 12L15.500 7.500L12 4L16.500 4.500Z", "#f0e820"),
    finish: f("M-1 -1H25V25H-1Z", "#7d98a4") + p("M4 6L9 21", "#666", 1.6) + f("M3 6Q8 9 12 6T22 6L20 15Q16 13 12 16T6 16Z", "#a9a8a8") + p("M8 8L9 11M13 6L14 9M18 6L19 8M6 11L7 14M12 10L13 13M17 10L18 13", "#66666a", 2.4),
    profile: p("M1 1V14Q1 20 6 20Q11 20 11 13Q11 7 16 7Q21 7 21 14", "#222", 1.5) + dot(1.500, 14) + dot(11, 14) + dot(21, 14),
    circle: ring(12, 12, 11, "#222", 1.6),
    filletG: p("M1 2H12Q22 2 22 12V23", GRAY, 1.4) + p("M12 2Q22 3 22 12", "#a07a78", 1.2),
    chamferG: p("M1 2H12L22 13V23", GRAY, 1.4) + p("M12 2L22 13", "#a07a78", 1.4),
    point: p("M12 2V22M3 12H21", "#222", 1.5),
    offsetGray: shapeOffset(GRAY, GRAY),
    projectG: p("M3 1V23M1 4H22M3 19H22M3 4L23 24", GRAY, 1.4),
    trimG: p("M1 16H23M4 1L15 24", GRAY, 1.4) + f("M13 13L18 6H23L24 10L19 17H14Z", "#8e8682"),
    extendG: p("M1 16H14M4 1L15 24", GRAY, 1.4) + p("M13 17L22 4", "#989078", 4),
    cornerG: p("M1 11H13M13 1V23M13 11H21", GRAY, 1.4) + p("M9 5L22 17", "#a07a78", 1.4),
    quickDimG: p("M1 7V18M23 7V18M1 12H23M3 10L1 12L3 14M21 10L23 12L21 14", "#77757e", 1.4) + p("M18 1L11 10H17L9 18", "#98947c", 3),
    constrG: p("M1 9L8 2M6 9L13 2M12 18H24M18 9V18", GRAY, 1.4),
    symG: p("M2 2V21H22V2M2 2H5M19 2H22", "#77757e", 1.6) + p("M12 1V23", "#555", 1.2, "none", dash) + p("M5 4H10M14 4H19M8 2L10 4L8 6M16 2L14 4L16 6M8 4V9H16V4", "#a07a78", 1.2),
    showG: f("M0 8L6 12L0 17Z", "#6a9a6c") + p("M9 9L16 1M15 9L22 2M12 22H24M18 12V22", GRAY, 1.5),
    convertG: `<rect x="1" y="2" width="11" height="9" fill="none" stroke="#77757e" stroke-width="1.300"/><rect x="11" y="14" width="13" height="9" fill="none" stroke="#77757e" stroke-width="1.300"/>` + f("M1 16H8V24H1Z", "#8e8e8e") + p("M13 13L21 5", "#9a9480", 3.4),
    matesG: p("M10 2Q3 -1 2 5Q3 11 9 9", "#8b91a0", 2.2) + f("M2 13L7 11L15 14V21L10 23L2 21ZM16 13L23 12L25 21L18 23Z", "#8b91a0") + p("M13 10L22 2", "#9a9480", 3.6),
    matesH: p("M10 2Q3 -1 2 5Q3 11 9 9", "#9a9ea8", 2.2) + f("M2 17L8 14V8H16V14L23 18L20 22L3 23Z", "#8b91a0"),

    link: `<g fill="none" stroke="#8f8a10" stroke-width="4"><ellipse cx="10" cy="7" rx="3.500" ry="6" transform="rotate(-12 10 7)"/><ellipse cx="14" cy="17" rx="3.500" ry="6" transform="rotate(-12 14 17)"/></g><g fill="none" stroke="#e6e06a" stroke-width="2"><ellipse cx="10" cy="7" rx="3.500" ry="6" transform="rotate(-12 10 7)"/><ellipse cx="14" cy="17" rx="3.500" ry="6" transform="rotate(-12 14 17)"/></g>`,
    lineV: p("M2 21L22 4", "#4a2a72", 1.5) + dot(2, 21) + dot(22, 4),
    lineAxis: p("M9 13V2M9 13L20 8", "#999", 1.5) + dot(9, 1, 1.8, "#999") + dot(21, 8, 1.8, "#999") + p("M3 14L20 22", "#4a2a72", 1.5) + p("M9 13L21 17", RED, 1.4) + dot(3, 14) + dot(21, 17),
    lineParallel: p("M3 18L19 3", "#4a2a72", 1.5) + p("M8 23L24 8", RED, 1.4, "none", dash) + dot(3, 18),
    linePerp: p("M2 8L24 15", "#4a2a72", 1.5) + p("M17 -2L9 22", RED, 1.4, "none", dash) + dot(2, 8),
    lineTan: p("M2 17L15 8", "#4a2a72", 1.5) + ring(19, 12, 5.500, RED, 1.3, dash) + dot(2, 17),
    lineTan2: p("M4 11L17 3", "#4a2a72", 1.5) + ring(19, 8, 5.500, RED, 1.3, dash) + ring(5, 17, 5.500, RED, 1.3, dash),
    linePtCurve: p("M0 14Q3 -1 11 6T24 3", RED, 1.3, "none", dash) + p("M7 18L14 10", "#4a2a72", 1.5) + p("M4 13L10 8", RED, 1.6) + dot(7, 18) + dot(10, 8, 1.600),
    lineNormal: p("M0 23Q3 8 11 15T24 12", RED, 1.3, "none", dash) + p("M11 13L18 5", "#4a2a72", 1.5) + p("M9 8L14 3", RED, 1.6) + dot(18, 5) + dot(14, 3, 1.600),
    bounded: f("M3 3L22 1L23 20L5 23Z", "url(#gSky)", "#2c5a98", 1) + p("M1 9L23 7M2 17H24M8 0V24M20 1L21 22", "#234a88", 1.2) + dot(1, 9, 1.400) + dot(8, 0, 1.400) + dot(24, 16, 1.400) + dot(21, 6, 1.400) + dot(8, 24, 1.400),
    arcV: p("M4 4Q17 6 20 21", "#4a2a72", 1.5) + dot(4, 4) + dot(15, 10) + dot(20, 21),
    arcTan: p("M4 6Q18 9 20 23", "#4a2a72", 1.5) + p("M2 0L10 11M16 15L24 21", RED, 1.3, "none", dash) + dot(4, 6) + dot(20, 22),
    arc3: p("M12 2Q21 4 20 12T12 21", "#4a2a72", 1.5) + p("M0 2H24M0 21H24M20 0V25", RED, 1.3, "none", dash),
    arcR: p("M12 1Q20 2 20 12", "#4a2a72", 1.5) + p("M0 2H24M20 0V25", RED, 1.3, "none", dash) + p("M11 11L18 4", RED, 1.5) + dot(11, 11, 1.200, "#333"),
    circA: bigCircle(12, 12, dot(12, 12, 1.2, "#333") + dot(12, 2.500) + dot(18, 5) + dot(21.500, 12)),
    circB: bigCircle(10, 13, dot(10, 13, 1.2, "#333") + p("M9 -2L24 14", RED, 1.3, "none", dash) + dot(8, 4) + dot(19, 15)),
    circC: bigCircle(10, 12, dot(10, 12, 1.2, "#333") + p("M0 2H24M0 22H24M20 0V25", RED, 1.3, "none", dash)),
    circD: bigCircle(10, 12, p("M10 12L17 5", RED, 1.5) + dot(10, 12, 1.2, "#333") + p("M0 2H24M20 0V24", RED, 1.3, "none", dash)),
    circE: bigCircle(12, 12, dot(12, 12) + dot(21.500, 12)),
    circF: bigCircle(12, 12, p("M12 12L18 6", "#c04040", 1.500) + dot(12, 12) + dot(18, 6, 1.400)),
    circG: bigCircle(10, 13, dot(10, 13) + p("M9 -2L24 14", RED, 1.3, "none", dash)),

    navAsm: f("M2 3L5 1L9 3V9L5 11L2 9ZM7 7L11 5L15 7V12L10 14L7 12Z", "#f0c838", "#a88010", 0.8) + p("M5 14V25M5 19H11M15 13H24", "#3c3c8c", 1.3) + f("M13 19L17 16L22 18V22L18 24L13 23Z", "#f0c838", "#a88010", 0.8),
    navCons: f("M4 0V10L12 5ZM20 0V10L12 5Z", "#1a30c8") + p("M12 -1V25", "#111", 1.3, "none", dash) + f("M0 14H9V24H0Z", "#f4e430", "#333", 1) + f("M14 13V24H24Z", "#c8142c", "#700", 0.6),
    navPart: f("M0 1Q5 -2 10 1V9Q5 12 0 9Z", "#b060c0", "#5c1c70", 1) + p("M5 13V25M5 19H11M13 9H24", "#3c3c8c", 1.3) + ring(17, 19, 4.500, "#7a2a8c", 1.5) + dot(17, 19, 1.500, "#7a2a8c"),
    books: f("M-1 7L5 0L10 2L9 22H-1Z", "#f08a28", "#7c3c08", 0.8) + f("M5 7L11 0L17 2V19L12 23H5Z", "#58c838", "#1c6c10", 0.8) + f("M12 7L17 0L24 2V18L19 23H12Z", "#38a0e8", "#104878", 0.8) + f("M19 7L24 2V18L19 23Z", "#1c68b0") + p("M-1 7L5 1M5 7L11 1M12 7L17 1M0 11H5M6 11H12M13 11H19", "#fff", 1.4),
    news: dot(9, 15, 9, "url(#gInfo)") + f("M7.500 8H10.500V11H7.500ZM6.500 12.500H10.500V19H12V20.500H6V19H7.500V14H6.500Z", "#fff") + p("M9 3Q18 3 21 14M9 -1Q23 0 25 14", "#3a72b8", 2.2),
    web: f("M3 1H15L21 7V24H3Z", "#f2f6fc", "#3a5a98", 1.4) + p("M15 1V7H21", "#3a5a98", 1.2) + dot(12, 14, 6, "#2a90c0") + f("M8 11Q12 7 16 12L13 18L8 16Z", "#2ea04a"),
    clock: dot(12, 12, 11.500, "#7b8794") + dot(12, 12, 9.500, "#f4f8fc") + p("M12 4V12.500H18", "#111", 2) + ring(12, 12, 8, "#8a94a0", 1, 'stroke-dasharray="1 3.200"'),
    roles: f("M1 4L7 2V20L1 23Z", "#e8e8e8", "#555", 1) + f("M9 3H23V20H9Z", "#fff", "#777", 1) + dot(12, 7, 2, "#2a80d0") + dot(12, 12, 2, "#38b038") + dot(12, 17, 2, "#d02828") + p("M16 7H21M16 12H21M16 17H21", "#777", 1.3),
    rainbow: f("M1 0H9V24H1Z", "url(#gRain)") + p("M12 9L20 22", "#222", 3) + p("M10 6L12 9", "#eee", 3),
    wizard: p("M2 2V19M5 2V19M8 2V19M1 5H9M1 10H9M1 15H9M9 5H23L15 17M2 22H12", "#2a70b8", 1.8) + p("M12 9L20 22", "#222", 2.8) + p("M10 6L12 9", "#eee", 3),
    users: dot(17, 6, 5, "#e8b060") + f("M10 18Q10 11 17 11Q24 11 24 18Z", "#2e9a3a") + dot(7, 13, 4.500, "#8a5a48") + f("M0 24Q0 17 7 17Q14 17 14 24Z", "#8a48c0") + dot(7, 14, 2.800, "#f0c8a0"),
    template: f("M1 5L7 3V21L1 23Z", "#e8e8e8", "#555", 1) + f("M9 2H23V21H9Z", "#fff", "#777", 1) + f("M10 4H21V17H17V12H14V17H10Z", "#b82020") + f("M13 4H18V9L16 12L13 9Z", "#5aa0e0"),

    smile: ring(12, 12, 10, "#1a74b0", 2.2) + p("M7 13Q12 20 17 13", "#1a74b0", 1.8) + dot(9, 9, 1.500, "#1a74b0") + dot(15, 9, 1.500, "#1a74b0"),
    mic: f("M8 4Q8 0 12 0Q16 0 16 4V11Q16 15 12 15Q8 15 8 11Z", "#1a74b0") + p("M4 10Q4 18 12 18T20 10M12 18V23M7 23H17", "#1a74b0", 2),
    keyboard: p("M1 4H23V20H1Z", "#1a74b0", 2) + p("M4 8H21M4 12H21", "#1a74b0", 2.200, "none", 'stroke-dasharray="2.500 1.500"') + p("M7 16.500H17", "#1a74b0", 2),
    person: dot(10, 6, 5, "#b4bcc8") + f("M1 21Q1 12 10 12Q18 12 18 21Z", "#b4bcc8") + f("M14 13H23V22H14Z", "#f4f6f8", "#b4bcc8", 1.4),
    shirt: f("M8 3Q12 7 16 3L24 7L21 13L18 11V22H6V11L3 13L0 7Z", "#1a74b0"),
    tiles: f("M0 3H10V11H0ZM12 3H22V11H12ZM0 13H10V21H0ZM12 13H22V21H12Z", "#1a74b0"),
    comma: dot(6, 8, 3, "#1a74b0") + f("M14 13H19V18Q18 22 14 23V20Q16 20 16 18H14Z", "#1a74b0"),
  };

  const menus: Menu[] = [
    { label: "文件", key: "F" },
    { label: "编辑", key: "E" },
    { label: "视图", key: "V" },
    { label: "插入", key: "S", split: true },
    { label: "格式", key: "R" },
    { label: "工具", key: "T" },
    { label: "装配", key: "A" },
    { label: "信息", key: "I" },
    { label: "分析", key: "L" },
    { label: "首选项", key: "P" },
    { label: "窗口", key: "O" },
    { label: "GC 工具箱" },
    { label: "燕秀UG模具7.05" },
    { label: "帮助", key: "H" },
  ];

  // "|" separator, "v" drop-down caret, "." overflow caret, "@..." labelled button
  const rows = [
    [
      "@start new open save | del | undo redo | @find fit v | orient boxes | info .",
      "fit v zoom pan rotate persp section v shaded v wireA wireB wireC clipA clipB v bg v .",
      "moveFace pullFace replaceFace dimFace groupFace labelFace v deleteFace mirrorFace redCube .",
    ],
    [
      "sheet v extrude revolve tube nx5 hole plan offsetFace sphere cyl block cone | emboss pads ribs patternFace poly blend chamfer sweep thicken shell domeRed domeGrid domeBlue cylPair boxSplit trimSheet sheets | unite v subtract intersect sweepRed .",
      "editFeature curveEdit cross sCurve planeBox curveOffset wave caliperBox .",
    ],
    [
      "list | hand palette | select diaA diaB diaC | hash dims v rulerDim .",
      "sketchX wireBox yBox emboss surfA surfB surfC surfD meshA meshB flagSurf twoShapes redSurf trimSheet crossGold bone | fold ribs ribsArrow ribsSplit .",
      "line arc rect spline text surfCurve offsetCurve surfLine bridge cylCurve bridgeB project section2 mirrorBox .",
    ],
  ];

  const selection =
    "asm | filterGray target v targetGray stepsGray | marquee v | boxPlain boxBlue | +snapAll snapSet +endPoint +midPoint pole intersectPt +centerPt quadPt +plusPt +onCurve onFace | grid |";
  const bottom =
    "sketch @finish profile line arc circle filletG chamferG rect spline point offsetGray v projectG | trimG extendG cornerG | quickDimG v | constrG symG showG v | convertG matesG matesH .";
  const side =
    "+link | lineV lineAxis lineParallel linePerp lineTan lineTan2 linePtCurve lineNormal bounded | arcV arcTan arc3 arcR | circA circB circC circD | circE circF circG";

  const tabGroups = [["navAsm", "navCons", "navPart", "books"], ["news"], ["web"], ["clock", "roles", "rainbow", "wizard", "users", "template"]];
  let activeTab = $state("clock");

  const ime = ["smile", "mic", "keyboard", "person", "shirt", "tiles"];
</script>

{#snippet icon(name: string, size = 26)}
  <svg viewBox="0 0 24 24" width={size} height={size} aria-hidden="true">{@html icons[name]}</svg>
{/snippet}

{#snippet items(list: string, size = 26)}
  {#each list.split(" ") as it}
    {#if it === "|"}
      <span class="sep"></span>
    {:else if it === "v"}
      <button class="caret" aria-label="more"></button>
    {:else if it === "."}
      <button class="caret low" aria-label="toolbar options"></button>
    {:else if it === "@start"}
      <button class="labelled start">{@render icon("logo", 28)}<span>开始</span><i></i></button>
    {:else if it === "@find"}
      <button class="labelled">{@render icon("find", 24)}<span>命令查找器</span></button>
    {:else if it === "@finish"}
      <button class="labelled off">{@render icon("finish", 24)}<span>完成草图</span></button>
    {:else}
      {@const name = it.replace("+", "")}
      <button class="tool" class:on={it[0] === "+"} aria-label={name}>{@render icon(name, size)}</button>
    {/if}
  {/each}
{/snippet}

<svg class="defs" width="0" height="0" aria-hidden="true">
  <defs>
    <linearGradient id="gGold"><stop offset="0" stop-color="#f9c65a" /><stop offset="1" stop-color="#ee8f1e" /></linearGradient>
    <linearGradient id="gPurple" x2="1" y2="1"><stop offset="0" stop-color="#8a44c4" /><stop offset="1" stop-color="#d4a4f4" /></linearGradient>
    <linearGradient id="gBlue" x2="1" y2="1"><stop offset="0" stop-color="#b4d4fb" /><stop offset="1" stop-color="#2550b4" /></linearGradient>
    <linearGradient id="gBlueH"><stop offset="0" stop-color="#7f90ee" /><stop offset=".4" stop-color="#d8e0ff" /><stop offset="1" stop-color="#5565cc" /></linearGradient>
    <linearGradient id="gSky"><stop offset="0" stop-color="#dcebfb" /><stop offset="1" stop-color="#5a96d8" /></linearGradient>
    <linearGradient id="gLav" x2="1" y2="1"><stop offset="0" stop-color="#8e92dc" /><stop offset=".5" stop-color="#e8eafc" /><stop offset="1" stop-color="#8a8ed0" /></linearGradient>
    <linearGradient id="gPanel" y2="1"><stop offset="0" stop-color="#b4bce8" /><stop offset="1" stop-color="#fafaff" /></linearGradient>
    <linearGradient id="gRain" x2="0" y2="1">
      <stop offset="0" stop-color="#c01010" /><stop offset=".3" stop-color="#f6a020" /><stop offset=".5" stop-color="#e8e830" />
      <stop offset=".7" stop-color="#38d060" /><stop offset="1" stop-color="#1850d0" />
    </linearGradient>
    <radialGradient id="gYel" cx=".35" cy=".35"><stop offset="0" stop-color="#ffffc0" /><stop offset="1" stop-color="#d8cf2c" /></radialGradient>
    <radialGradient id="gGlobe" cx=".35" cy=".4"><stop offset="0" stop-color="#a8f0ff" /><stop offset="1" stop-color="#1878b0" /></radialGradient>
    <radialGradient id="gInfo" cx=".4" cy=".3"><stop offset="0" stop-color="#58b0f0" /><stop offset="1" stop-color="#0c58a8" /></radialGradient>
  </defs>
</svg>

<div class="screen">
  <div class="window">
    <header class="title">
      {@render icon("logo", 20)}
      <h1>青宇老师QQ2311932400 微信sjmjsj6666 - 建模 - [JXJY-002.prt （修改的） ]</h1>
      <strong>SIEMENS</strong>
      <div class="winbtns">
        <button aria-label="minimize"><svg viewBox="0 0 20 20" width="20" height="20"><path d="M4 13h7v3H4z" fill="#fff" /></svg></button>
        <button aria-label="maximize"><svg viewBox="0 0 20 20" width="20" height="20"><path d="M5 5h10v10H5z" fill="none" stroke="#fff" stroke-width="2" /></svg></button>
        <button class="close" aria-label="close"><svg viewBox="0 0 20 20" width="20" height="20"><path d="M4 4l10 11M14 4L4 15" stroke="#fff" stroke-width="3" /></svg></button>
      </div>
    </header>

    <nav class="menu">
      <span class="grip"></span>
      <span class="part">{@render icon("part", 17)}</span>
      {#each menus as m}
        <button class:split={m.split}>{m.label}{#if m.key}<span class="key">(<u>{m.key}</u>)</span>{/if}</button>
      {/each}
      <div class="mdi">
        <button aria-label="minimize part"><svg viewBox="0 0 16 16" width="16" height="16"><path d="M4 12h7" stroke="#444" stroke-width="2" /></svg></button>
        <button aria-label="restore part"><svg viewBox="0 0 16 16" width="16" height="16"><path d="M6 6V3h7v6h-3M3 6h7v7H3zM3 8h7M6 4h7" fill="none" stroke="#555" stroke-width="1.4" /></svg></button>
        <button aria-label="close part"><svg viewBox="0 0 16 16" width="16" height="16"><path d="M4 4l7 8M11 4l-7 8" stroke="#444" stroke-width="2.6" /></svg></button>
      </div>
    </nav>

    {#each rows as row, r}
      <div class="row">
        {#each row as bar, b}
          <div class="bar" class:apart={r === 0 && b === 2}>
            <span class="grip"></span>
            {@render items(bar)}
          </div>
        {/each}
      </div>
    {/each}

    <div class="selbar">
      <label class="pick w1"><select aria-label="类型过滤器"><option>全部</option></select></label>
      <label class="pick w2"><select aria-label="选择过滤器"><option>没有选择过滤器</option></select></label>
      <label class="pick w3"><select aria-label="选择范围"><option>整个装配</option></select></label>
      {@render items(selection, 20)}
      <button class="word">保存视图</button>
      {@render items("saveView rulerS mirrorS angle", 20)}
      <button class="word">几何属性（即将失效）...</button>
      <button class="word wide">设置镜像平面...</button>
      {@render items("caliperS", 20)}
      <button class="word">形状<span class="key">(<u>H</u>)</span></button>
      <button class="caret" aria-label="more"></button>
      <button class="word">检查几何体</button>
      <button class="caret low end" aria-label="toolbar options"></button>
    </div>

    <div class="status">
      <span class="cue"></span>
      <span class="msg"></span>
      <span class="cell"></span>
      <span class="modes">{@render icon("gridOff", 17)}{@render icon("fullView", 17)}</span>
    </div>

    <main>
      <aside class="tabs">
        {#each tabGroups as group}
          <div class="group">
            {#each group as t}
              <button class:active={t === activeTab} aria-label={t} onclick={() => (activeTab = t)}>{@render icon(t, 24)}</button>
            {/each}
          </div>
        {/each}
      </aside>
      <div class="edge"></div>
      <aside class="side">
        <div class="column">
          <span class="hgrip"></span>
          {@render items(side, 24)}
          <span class="back"></span>
        </div>
      </aside>

      <section class="view">
        <svg viewBox="176 227 1652 817" preserveAspectRatio="xMidYMid meet" role="img" aria-label="JXJY-002">
          <defs>
            <linearGradient id="mTop" gradientUnits="userSpaceOnUse" x1="1100" y1="80" x2="1088" y2="165"><stop offset="0" stop-color="#c8c8c8" /><stop offset="1" stop-color="#f0f0f0" /></linearGradient>
            <linearGradient id="mPlate"><stop offset="0" stop-color="#f3f3f3" /><stop offset=".3" stop-color="#fdfdfd" /><stop offset="1" stop-color="#fff" /></linearGradient>
            <linearGradient id="mSide" gradientUnits="userSpaceOnUse" x1="1715" y1="620" x2="1905" y2="570"><stop offset="0" stop-color="#f8f8f8" /><stop offset=".35" stop-color="#e2e2e2" /><stop offset=".85" stop-color="#8e8e8e" /><stop offset="1" stop-color="#b4b4b4" /></linearGradient>
            <linearGradient id="mCap"><stop offset="0" stop-color="#efefef" /><stop offset="1" stop-color="#9c9c9c" /></linearGradient>
            <linearGradient id="mPillar"><stop offset="0" stop-color="#c9c9c9" /><stop offset="1" stop-color="#dcdcdc" /></linearGradient>
            <linearGradient id="mGrip" x2="0" y2="1"><stop offset="0" stop-color="#b2b2b2" /><stop offset="1" stop-color="#9c9c9c" /></linearGradient>
            <linearGradient id="mLeg"><stop offset="0" stop-color="#aaa" /><stop offset="1" stop-color="#8b8b8b" /></linearGradient>
            <linearGradient id="mSlot" x2="0" y2="1"><stop offset="0" stop-color="#666" /><stop offset=".6" stop-color="#c4c4c4" /><stop offset="1" stop-color="#fff" /></linearGradient>
          </defs>

          <g transform="translate(660 440) scale(.33333)" stroke="#333" stroke-width="3" stroke-linejoin="round" fill="none">
            <!-- far skirt and underside -->
            <path fill="#bcbcbc" stroke-width="5" d="M248 607L250 540L480 480L1600 520L1760 700L1940 1050Q1910 1105 1830 1140L1760 1132Q1710 1128 1700 1090Q1690 1040 1650 1005Q1598 985 1590 935Q1586 890 1575 840Q1550 745 1480 715Q1440 697 1380 692L1160 664Q960 636 720 624L410 611Z" />
            <path fill="#cbcbcb" stroke="none" d="M320 548L480 480L640 493Q1100 500 1560 567L1545 593L960 573Z" />
            <path d="M320 548L960 573L1545 593M295 552V608" />
            <path fill="#5a5a5a" d="M248 540L290 545L265 568V605H248Z" stroke="none" />
            <path fill="#4e4e4e" stroke="none" d="M262 570L478 462V478L318 550Z" />
            <path fill="#f2f2f2" stroke-width="2" d="M252 580L268 578V604H252Z" />

            <!-- clip pocket -->
            <path fill="#555" d="M1160 580L1195 584V642L1160 644ZM1290 586L1318 588L1308 648L1288 648Z" />
            <path fill="#d4d4d4" d="M1195 584L1290 587V643L1190 642ZM1172 594H1188V618H1172ZM1294 602H1312V622H1294Z" />

            <!-- inner corner rib -->
            <path fill="#707070" d="M1545 567L1600 573Q1650 600 1690 642L1560 697H1554V588Z" />
            <path fill="#c8c8c8" d="M1556 590H1582V652L1556 668ZM1584 588H1594V640L1584 648ZM1590 696L1682 650L1716 678L1718 702L1555 698Z" />
            <path fill="url(#mLeg)" d="M1665 705L1718 702Q1736 780 1745 890Q1760 980 1810 1010L1818 1132L1722 1110Z" stroke-width="2" />

            <!-- grip tip -->
            <path fill="#7c7c7c" d="M1806 1005Q1860 1030 1940 1050Q1900 1110 1818 1134L1812 1070Z" />
            <path fill="#444" stroke="none" d="M1940 1050Q1915 1110 1830 1142L1800 1134Q1880 1120 1920 1052Z" />
            <path d="M1722 1110L1812 1126" stroke-width="2" />

            <!-- main cover -->
            <path fill="url(#mTop)" d="M520 70Q780 64 960 83Q1290 100 1615 160L1630 220Q1300 165 960 145Q790 132 620 130Q600 80 520 70Z" stroke-width="2" />
            <path fill="url(#mCap)" d="M1615 160Q1730 172 1768 238Q1700 222 1630 220Z" stroke-width="2" />
            <path fill="url(#mSide)" stroke="#555" stroke-width="2" d="M1630 220Q1700 222 1768 238Q1860 470 1890 680Q1925 860 1940 1050Q1860 1036 1805 1005Q1795 700 1740 540Q1700 400 1630 220Z" />
            <path fill="url(#mPlate)" d="M620 130Q790 132 960 145Q1300 165 1630 220Q1690 370 1725 490Q1795 700 1805 1005Q1755 960 1745 890L1735 800Q1728 690 1690 642Q1620 562 1545 567Q1100 485 640 493Z" />
            <path stroke="#222" stroke-width="6" d="M1600 573Q1690 605 1712 680Q1730 740 1738 830Q1742 965 1806 1005" />

            <!-- rear housing with slots -->
            <path fill="#686868" d="M255 345L258 205Q262 170 290 158L345 128L400 118Q420 85 480 75L465 100L478 462L425 485L425 345Z" />
            <path fill="#8f8f8f" stroke="none" d="M260 200Q262 170 290 158L345 128L400 118Q420 85 480 75L470 96L440 100L405 140L350 145L280 180Z" />
            <path fill="url(#mSlot)" d="M272 190Q280 165 306 180V285Q300 310 275 302ZM310 165Q340 145 370 165V262Q360 280 314 290ZM374 160Q385 145 405 145V245Q395 275 376 262ZM422 118Q432 105 452 105V205Q450 238 422 228Z" />
            <path d="M285 180V270M330 160V265M388 152V240M434 110V205M310 200H368M272 250H306" stroke-width="2" />
            <path d="M318 290V340M362 280V340M404 262V330" stroke-width="2" />
            <path fill="url(#mPillar)" d="M465 100Q540 85 580 105Q606 125 607 160L626 493L480 497Z" />
            <path fill="#c4c4c4" d="M465 100Q468 80 485 72L520 70Q600 70 620 130L640 493H626L607 150Q600 92 520 92Q485 90 465 100Z" stroke-width="2" />
            <path d="M474 110L490 497M520 70L515 92" stroke-width="2" />

            <!-- side lug -->
            <path fill="#8c8c8c" d="M66 505L140 490L425 480L318 548L285 538L90 515Z" />
            <path fill="#efefef" stroke-width="2" d="M90 508L125 492L150 506L118 516ZM140 500Q220 485 290 498Q270 520 170 516ZM275 528L300 508L340 516L325 540ZM300 500L392 488L370 510Z" />
            <path fill="#dedede" d="M66 382Q75 355 120 350L175 345L395 340Q400 318 415 322Q428 330 426 362L240 370Z" />
            <path fill="url(#mGrip)" d="M66 382Q120 372 172 371L412 366V482L172 490L66 507Z" />
            <path fill="#8a8a8a" d="M412 366L426 360V478L412 482Z" stroke-width="2" />
            <path d="M172 345V490" stroke-width="2" />

            <!-- engraved valve marks -->
            <g stroke="#222" stroke-width="3">
              <path d="M1050 346L1168 352Q1175 360 1168 367L1050 360Q1042 352 1050 346ZM1055 446L1174 451Q1181 459 1174 466L1055 460Q1047 452 1055 446Z" />
              <path d="M1066 402L1090 402Q1108 380 1128 402L1154 405Q1160 410 1154 415L1128 414Q1108 435 1090 412L1066 411Q1060 406 1066 402Z" />
              <path d="M1192 412L1245 384V406L1360 412V390L1418 425L1362 455V432L1247 426L1248 449Z" />
              <path d="M1433 364L1550 370Q1556 377 1550 384L1433 378Q1426 371 1433 364ZM1438 464L1555 469Q1562 476 1555 483L1438 478Q1430 470 1438 464Z" />
              <path d="M1512 386Q1520 382 1522 390L1506 416Q1512 436 1488 440L1474 460Q1465 465 1463 456L1478 432Q1474 410 1496 408Z" />
            </g>
          </g>

          <!-- view triad -->
          <g>
            <path d="M237 980h26l6 2v23l-6 2h-26z" fill="#d2d3d4" stroke="#b4b5b6" stroke-width="2" />
            <path d="M263 980v27" stroke="#b4b5b6" />
            <path d="M247 977h32" stroke="#2a4cd0" stroke-width="3" />
            <path d="M272 974l15 5-15 4z" fill="#2038a8" />
            <path d="M243 981v32" stroke="#c02030" stroke-width="3" />
            <path d="M240 1008h7l-3 13z" fill="#a01020" />
            <path d="M241 978l-8 5" stroke="#309030" stroke-width="3" />
            <circle cx="242" cy="977" r="5" fill="#eef0ee" />
            <g font-family="Liberation Sans, sans-serif" font-size="12">
              <text x="288" y="984" fill="#2a4cd0">Z</text>
              <text x="239" y="1033" fill="#c02030">X</text>
              <text x="226" y="989" fill="#309030">Y</text>
            </g>
          </g>

          <!-- pointer -->
          <circle cx="872" cy="787" r="32" fill="#dbe30c" />
          <g fill="none" stroke="#444">
            <circle cx="872" cy="787" r="12" stroke-dasharray="11 7.850" stroke-dashoffset="-4" />
            <path d="M871 770v16h-16v2h16v16h2v-16h16v-2h-16v-16z" fill="#eef060" />
          </g>
        </svg>
      </section>
    </main>

    <footer>
      <div class="bar sketchbar"><span class="grip"></span>{@render items(bottom, 24)}</div>
      <div class="ime">
        <svg class="sogou" viewBox="0 0 32 30" width="32" height="30" aria-hidden="true">
          <path d="M1 4L26 0Q28 0 28 2L31 24Q31 26 29 26L6 30Q4 30 4 28L0 6Q0 4 1 4Z" fill="#d8431c" />
          <path d="M25 7Q12 4 7 9Q6 14 16 14Q26 14 24 19Q19 24 7 21" fill="none" stroke="#fff" stroke-width="4" />
        </svg>
        <span class="lang">英</span>
        <span class="ic">{@render icon("comma", 16)}</span>
        {#each ime as n}
          <button class="ic" aria-label={n}>{@render icon(n, 17)}</button>
        {/each}
      </div>
    </footer>
  </div>
</div>

<style>
  :global(body) { background: #000; overflow: hidden; }
  .defs { position: absolute; }
  svg { display: block; flex: none; overflow: visible; }

  .screen {
    box-sizing: border-box;
    height: 100vh;
    padding: 0 92px 0 94px;
    background: #000;
    font: 13px/18px "Noto Sans CJK SC", "Liberation Sans", sans-serif;
    color: #111;
  }
  .window { display: flex; flex-direction: column; height: 100%; background: #d9d9d9; overflow: hidden; }
  button { margin: 0; padding: 0; border: 0; background: none; font: inherit; color: inherit; white-space: nowrap; }

  .title {
    display: flex;
    align-items: center;
    box-sizing: border-box;
    flex: none;
    height: 35px;
    padding: 0 0 3px 2px;
    border-top: 2px solid #dfe6e4;
    background: linear-gradient(#777 0, #4c4c4c 10px, #1a1a1a 11px, #1a1a1a 31px, #000 32px);
    color: #f2f2f2;
  }
  .title h1 { flex: 1; margin: 0 0 0 3px; font-size: 14px; font-weight: 400; white-space: pre; }
  .title strong { margin-right: 30px; font: 800 14px/18px "Open Sans", "Liberation Sans", sans-serif; color: #fff; }
  .winbtns { display: flex; gap: 4px; margin-right: -9px; }
  .winbtns button { border: 1px solid #6d6d6d; border-radius: 3px; background: linear-gradient(#5a5a5a, #2c2c2c); }
  .winbtns .close { background: linear-gradient(#e08074, #c03024); border-color: #e4a49c; }

  .menu { display: flex; align-items: center; flex: none; box-sizing: border-box; height: 26px; padding: 0 0 2px 1px; background: linear-gradient(#e8e8e8, #dcdcdc); }
  .menu > button { margin-right: 12px; }
  .menu .split { padding-left: 9px; border-left: 1px solid #bbb; margin-left: -8px; line-height: 20px; }
  .part { margin: 0 5px 0 0; }
  .key { font: 12px/18px "Liberation Mono", monospace; }
  .mdi { display: flex; gap: 3px; margin: 0 -3px 0 auto; }
  .mdi button { border: 1px solid #888; border-radius: 4px; background: #f6f6f6; }

  .grip {
    flex: none;
    width: 3px;
    height: 26px;
    margin: 0 3px 0 1px;
    background: repeating-linear-gradient(#a8a8a8 0 2px, #eee 2px 4px);
  }
  .menu .grip { height: 18px; margin-left: 2px; }

  .row { display: flex; flex: none; height: 37px; background: linear-gradient(#e0e0e0, #d0d0d0); }
  .bar {
    display: flex;
    align-items: center;
    box-sizing: border-box;
    padding: 0 1px;
    border-top: 1px solid #f0f0f0;
    border-right: 1px solid #bbb;
    background: linear-gradient(#e4e4e4, #cecece);
  }
  .bar.apart { margin-left: 68px; }
  .tool { display: flex; align-items: center; justify-content: center; flex: none; box-sizing: border-box; width: 34px; height: 32px; }
  .sep { flex: none; width: 1px; align-self: stretch; margin: 2px 3px 2px 2px; background: #bbb; box-shadow: 1px 0 #f4f4f4; }
  .caret { flex: none; width: 13px; height: 20px; }
  .caret::after { content: ""; display: block; width: 0; margin: 0 auto; border: 4px solid transparent; border-top-color: #111; border-bottom: 0; }
  .caret.low { align-self: flex-end; width: 12px; height: 12px; }
  .labelled { display: flex; align-items: center; gap: 5px; padding: 0 3px; }
  .start { gap: 4px; padding: 0 3px 0 1px; }
  .start i { border: 4px solid transparent; border-top-color: #111; border-bottom: 0; }
  .labelled.off { gap: 6px; padding: 0 5px; color: #999; }

  .selbar {
    display: flex;
    align-items: center;
    flex: none;
    box-sizing: border-box;
    height: 30px;
    padding: 0 0 1px 6px;
    border-top: 2px solid #a6a6a6;
    background: linear-gradient(#cdcdcd, #dadada);
  }
  .selbar .tool { width: 25px; height: 25px; }
  .selbar .sep { margin: 1px 2px; }
  .tool.on { border: 1px solid #444; border-radius: 2px; background: #fff; }
  .pick { position: relative; flex: none; height: 19px; margin-right: 9px; }
  .w1 { width: 49px; }
  .w2 { width: 121px; }
  .w3 { width: 128px; margin-right: 4px; }
  .pick select {
    appearance: none;
    box-sizing: border-box;
    width: 100%;
    height: 19px;
    padding: 0 0 0 2px;
    border: 1px solid #6d7f90;
    border-radius: 2px;
    background: #fff;
    font: 13px/16px "Noto Sans CJK SC", sans-serif;
    color: #111;
  }
  .pick::before { content: ""; position: absolute; right: 1px; top: 1px; width: 17px; height: 17px; background: linear-gradient(#e4f2fc, #6aa6d8); border-left: 1px solid #456c90; pointer-events: none; }
  .pick::after { content: ""; position: absolute; right: 4px; top: 6px; border: 6px solid transparent; border-top: 8px solid #0c1420; border-bottom: 0; pointer-events: none; }
  .word { padding: 0 5px; }
  .wide { padding: 0 10px 0 12px; }
  .caret.end { margin-left: auto; margin-right: -4px; }

  .status { display: flex; align-items: stretch; flex: none; height: 23px; border-top: 1px solid #efefef; border-bottom: 1px solid #999; background: #dadada; }
  .status span { border-right: 1px solid #f6f6f6; box-shadow: inset -1px 0 #c0c0c0; }
  .cue { flex: 817; }
  .msg { flex: 815; }
  .cell { width: 21px; }
  .status .modes { display: flex; align-items: center; gap: 5px; width: 78px; box-sizing: border-box; padding-left: 42px; overflow: hidden; border: 0; box-shadow: none; }

  main { display: flex; flex: 1; min-height: 0; }
  .tabs { display: flex; flex-direction: column; gap: 16px; box-sizing: border-box; width: 36px; padding: 18px 0 0 5px; border-top: 1px solid #777; border-right: 1px solid #777; background: linear-gradient(90deg, #a4a4a4, #b0b0b0); }
  .group { display: flex; flex-direction: column; gap: 3px; }
  .tabs button {
    display: flex;
    align-items: center;
    box-sizing: border-box;
    height: 43px;
    margin-left: 2px;
    padding-left: 2px;
    border: 1px solid #8a8a8a;
    border-right: 0;
    border-radius: 4px 0 0 4px;
    background: linear-gradient(90deg, #eee, #dcdcdc);
    overflow: hidden;
  }
  .tabs .active { height: 47px; margin: -2px -1px -3px 0; padding-left: 4px; background: #f2f2f2; }
  .edge { width: 11px; background: #f3f3f3; }
  .side { width: 35px; background: #cacaca; }
  .column { display: flex; flex-direction: column; align-items: center; padding: 4px 0; border-bottom: 1px solid #aaa; background: linear-gradient(90deg, #e2e2e2, #d4d4d4); }
  .column .tool { height: 34px; }
  .column .tool.on { width: 32px; }
  .column .sep { width: 30px; height: 1px; margin: 3px 0; align-self: center; background: #b0b0b0; box-shadow: 0 1px #fff; }
  .hgrip { width: 26px; height: 2px; margin-bottom: 3px; background: repeating-linear-gradient(90deg, #999 0 2px, transparent 2px 4px); }
  .back { align-self: flex-start; margin-left: 5px; border: 4px solid transparent; border-right-color: #111; border-left: 0; }

  .view { flex: 1; min-width: 0; background: linear-gradient(#b1b3b5 0, #c3c6c8 25%, #d0d3d5 48%, #dde0e2 68%, #e5e8ea 85%, #e4e7e9 100%); }
  .view svg { width: 100%; height: 100%; }

  footer { position: relative; display: flex; flex: none; height: 35px; padding-left: 330px; background: linear-gradient(#e2e2e2, #c8c8c8); }
  .sketchbar { padding-bottom: 0; }
  .ime { position: absolute; right: 0; bottom: 12px; display: flex; align-items: center; height: 25px; box-sizing: border-box; border: 1px solid #b4b4b4; border-right: 0; background: #fdfdfd; overflow: visible; }
  .sogou { margin: -4px 0 0 -8px; }
  .lang { width: 24px; text-align: center; font-size: 16px; font-weight: 700; color: #1a74b0; }
  .ic { display: flex; justify-content: center; width: 24px; }
  .ic:last-child { width: 11px; overflow: hidden; justify-content: flex-end; }
</style>
